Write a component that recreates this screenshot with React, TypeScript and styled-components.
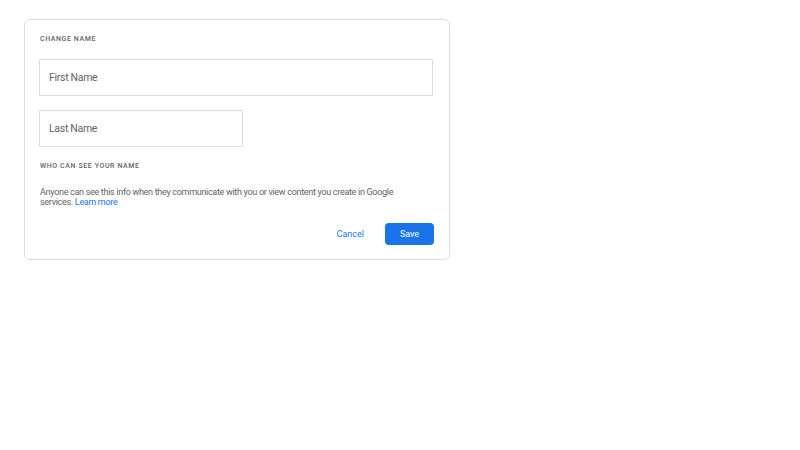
import React from "react";
import styled, { createGlobalStyle } from "styled-components";

const Global = createGlobalStyle`
  html, body { margin: 0; padding: 0; background: #fff; }
  body { font-family: Roboto, "Liberation Sans", Arial, sans-serif; }
  * { box-sizing: border-box; }
`;

const Page = styled.div`
  padding: 19px 0 0 24px;
`;

const Card = styled.section`
  width: 426px;
  border: 1px solid #dadce0;
  border-radius: 6px;
  padding: 14px 15px 14px 14px;
  display: flex;
  flex-direction: column;
`;

const SectionTitle = styled.h2<{ $top?: number }>`
  margin: ${(p) => p.$top ?? 0}px 0 0 1px;
  font-size: 7px;
  line-height: 10px;
  font-weight: 500;
  letter-spacing: 0.6px;
  text-transform: uppercase;
  color: #5f6368;
`;

const Field = styled.input<{ $width: number; $top: number }>`
  display: block;
  width: ${(p) => p.$width}px;
  height: 37px;
  margin-top: ${(p) => p.$top}px;
  border: 1px solid #dadce0;
  border-radius: 1px;
  padding: 0 9px;
  font-family: Roboto, "Liberation Sans", Arial, sans-serif;
  font-size: 10.5px;
  letter-spacing: -0.3px;
  color: #202124;
  outline: none;
  &::placeholder { color: #5f6368; }
`;

const Text = styled.p`
  margin: 16px 0 0 1px;
  max-width: 380px;
  font-size: 9px;
  line-height: 10px;
  letter-spacing: -0.3px;
  color: #5f6368;
`;

const Link = styled.a`
  color: #1a73e8;
  text-decoration: none;
`;

const Actions = styled.div`
  display: flex;
  justify-content: flex-end;
  align-items: center;
  gap: 7px;
  margin-top: 16px;
`;

const Button = styled.button<{ $primary?: boolean }>`
  height: 22px;
  min-width: 49px;
  padding: 0 14px;
  border: none;
  border-radius: 4px;
  font-family: Roboto, "Liberation Sans", Arial, sans-serif;
  font-size: 9px;
  font-weight: 400;
  cursor: pointer;
  background: ${(p) => (p.$primary ? "#1a73e8" : "transparent")};
  color: ${(p) => (p.$primary ? "#ffffff" : "#1a73e8")};
`;

export default function App() {
  return (
    <>
      <Global />
      <Page>
        <Card>
          <SectionTitle>Change name</SectionTitle>
          <Field $width={394} $top={15} placeholder="First Name" />
          <Field $width={204} $top={14} placeholder="Last Name" />
          <SectionTitle $top={14}>Who can see your name</SectionTitle>
          <Text>
            Anyone can see this info when they communicate with you or view content you create in Google
            services. <Link href="#">Learn more</Link>
          </Text>
          <Actions>
            <Button>Cancel</Button>
            <Button $primary>Save</Button>
          </Actions>
        </Card>
      </Page>
    </>
  );
}
